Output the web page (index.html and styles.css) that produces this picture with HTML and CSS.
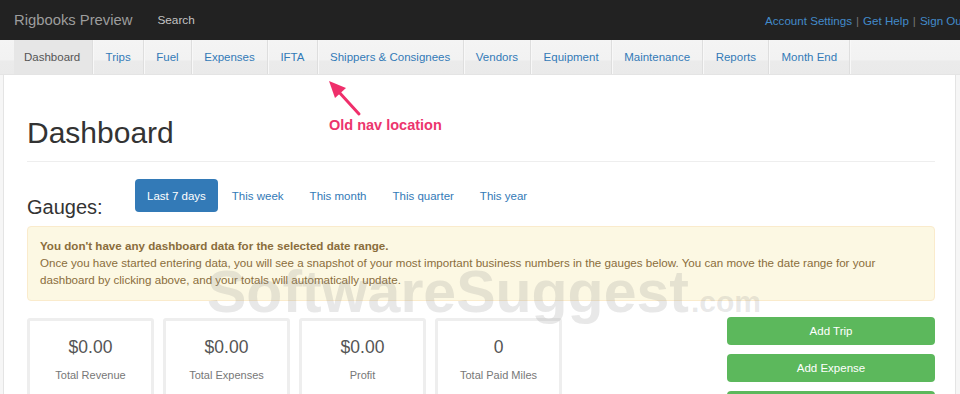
FILE: index.html
```html
<!DOCTYPE html>
<html lang="en">
<head>
<meta charset="utf-8">
<title>Rigbooks Preview - Dashboard</title>
<link rel="stylesheet" href="styles.css">
</head>
<body>
<header class="topbar">
  <a class="brand" href="#">Rigbooks Preview</a>
  <a class="search" href="#">Search</a>
  <div class="account">
    <a href="#">Account Settings</a><span class="sep">|</span><a href="#">Get Help</a><span class="sep">|</span><a href="#">Sign Out</a>
  </div>
</header>
<nav class="mainnav">
  <ul class="navlist">
    <li class="navitem active"><a href="#">Dashboard</a></li>
    <li class="navitem"><a href="#">Trips</a></li>
    <li class="navitem"><a href="#">Fuel</a></li>
    <li class="navitem"><a href="#">Expenses</a></li>
    <li class="navitem"><a href="#">IFTA</a></li>
    <li class="navitem"><a href="#">Shippers &amp; Consignees</a></li>
    <li class="navitem"><a href="#">Vendors</a></li>
    <li class="navitem"><a href="#">Equipment</a></li>
    <li class="navitem"><a href="#">Maintenance</a></li>
    <li class="navitem"><a href="#">Reports</a></li>
    <li class="navitem"><a href="#">Month End</a></li>
  </ul>
</nav>
<main class="panel">
  <h1 class="title">Dashboard</h1>
  <div class="range">
    <h3 class="range-label">Gauges:</h3>
    <ul class="pills">
      <li class="pill active">Last 7 days</li>
      <li class="pill">This week</li>
      <li class="pill">This month</li>
      <li class="pill">This quarter</li>
      <li class="pill">This year</li>
    </ul>
  </div>
  <div class="alert">
    <strong>You don't have any dashboard data for the selected date range.</strong><br>
    Once you have started entering data, you will see a snapshot of your most important business numbers in the gauges below. You can move the date range for your<br>
    dashboard by clicking above, and your totals will automatically update.
  </div>
  <div class="lower">
    <div class="gauges">
      <div class="gauge"><div class="gauge-value">$0.00</div><div class="gauge-label">Total Revenue</div></div>
      <div class="gauge"><div class="gauge-value">$0.00</div><div class="gauge-label">Total Expenses</div></div>
      <div class="gauge"><div class="gauge-value">$0.00</div><div class="gauge-label">Profit</div></div>
      <div class="gauge"><div class="gauge-value">0</div><div class="gauge-label">Total Paid Miles</div></div>
    </div>
    <div class="actions">
      <a class="btn-green" href="#">Add Trip</a>
      <a class="btn-green" href="#">Add Expense</a>
      <a class="btn-green" href="#">Add Fuel</a>
    </div>
  </div>
</main>
<div class="watermark">SoftwareSuggest<span class="wm-com">.com</span></div>
<div class="annotation">
  <svg class="arrow" width="40" height="40" viewBox="0 0 40 40">
    <line x1="33" y1="35" x2="12" y2="12" stroke="#ef2f6b" stroke-width="3" stroke-linecap="round"/>
    <polygon points="3,2 20,9 9,19" fill="#ef2f6b"/>
  </svg>
  <span class="note">Old nav location</span>
</div>
</body>
</html>
```
FILE: styles.css
```css
* { box-sizing: border-box; }
html, body { margin: 0; padding: 0; }
body {
  background: #f6f6f6;
  font-family: "Liberation Sans", Arial, Helvetica, sans-serif;
  color: #333;
  width: 960px;
  height: 394px;
  overflow: hidden;
  position: relative;
}
a { text-decoration: none; }
ul { list-style: none; margin: 0; padding: 0; }

.topbar {
  height: 40px;
  background: #222;
  display: flex;
  align-items: center;
  padding-left: 14px;
  white-space: nowrap;
}
.brand { color: #9d9d9d; font-size: 14.8px; }
.search { color: #c4c4c4; font-size: 11.8px; margin-left: 25px; }
.account {
  margin-left: auto;
  margin-right: -5px;
  font-size: 11.6px;
  color: #428bca;
}
.account a { color: #428bca; }
.sep { color: #777; margin: 0 4px; }

.mainnav {
  height: 35px;
  background: linear-gradient(#f4f4f4 0%, #f2f2f2 58%, #ebebeb 62%, #eaeaea 100%);
  border-bottom: 1px solid #e4e4e4;
  padding-left: 14px;
}
.navlist { display: flex; height: 34px; }
.navitem {
  border-right: 1px solid #dedede;
  box-shadow: 1px 0 0 #f8f8f8;
}
.navitem a {
  display: block;
  line-height: 34px;
  padding: 0 12.3px;
  font-size: 11.5px;
  color: #337ab7;
}
.navitem.active { background: #e6e6e6; }
.navitem.active a { color: #555; padding: 0 12px 0 10px; }

.panel {
  background: #fff;
  margin: 0 4px 0 3px;
  border-left: 1px solid #e4e4e4;
  border-right: 1px solid #e4e4e4;
  padding: 41px 20px 0 23px;
  height: 360px;
}
.title {
  margin: 0;
  font-size: 30px;
  line-height: 33px;
  font-weight: normal;
  color: #333;
  padding-bottom: 12px;
  border-bottom: 1px solid #eee;
}
.range {
  display: flex;
  align-items: flex-start;
  margin-top: 17px;
}
.range-label {
  width: 108px;
  margin: 18px 0 0;
  font-size: 20px;
  line-height: 20px;
  font-weight: normal;
  color: #333;
}
.pills { display: flex; gap: 2px; }
.pill {
  height: 33px;
  line-height: 34px;
  padding: 0 12px;
  border-radius: 4px;
  font-size: 11.5px;
  color: #337ab7;
}
.pill.active { background: #337ab7; color: #fff; }

.alert {
  margin-top: 9px;
  background: #fcf8e3;
  border: 1px solid #faebcc;
  border-radius: 4px;
  color: #8a6d3b;
  padding: 10px 12px 12px;
  font-size: 11.6px;
  line-height: 17px;
  white-space: nowrap;
}
.alert strong { font-weight: bold; }

.lower {
  display: flex;
  justify-content: space-between;
  margin-top: 17px;
}
.gauges { display: flex; gap: 9px; }
.gauge {
  width: 127px;
  height: 100px;
  border: 3px solid #eee;
  border-radius: 3px;
  text-align: center;
  padding-top: 16px;
}
.gauge-value {
  font-size: 17.5px;
  line-height: 20px;
  color: #555;
}
.gauge-label {
  margin-top: 11px;
  font-size: 11px;
  line-height: 14px;
  color: #777;
}
.actions {
  width: 208px;
  display: flex;
  flex-direction: column;
  gap: 9px;
  margin-top: -1px;
}
.btn-green {
  display: block;
  height: 28px;
  line-height: 28px;
  border-radius: 4px;
  background: #5cb85c;
  color: #fff;
  text-align: center;
  font-size: 11.5px;
}

.watermark {
  position: absolute;
  left: 207px;
  top: 262px;
  font-size: 59px;
  line-height: 60px;
  font-weight: bold;
  color: rgba(140, 140, 140, 0.2);
  white-space: nowrap;
  pointer-events: none;
}
.wm-com { font-size: 30px; margin-left: 2px; }

.annotation {
  position: absolute;
  left: 326px;
  top: 79px;
  width: 130px;
  height: 60px;
}
.arrow { position: absolute; left: 0; top: 0; }
.note {
  position: absolute;
  left: 3px;
  top: 38px;
  font-size: 14.5px;
  font-weight: bold;
  color: #ec356d;
  white-space: nowrap;
  text-shadow: 0 0 1px #fff;
}
```
